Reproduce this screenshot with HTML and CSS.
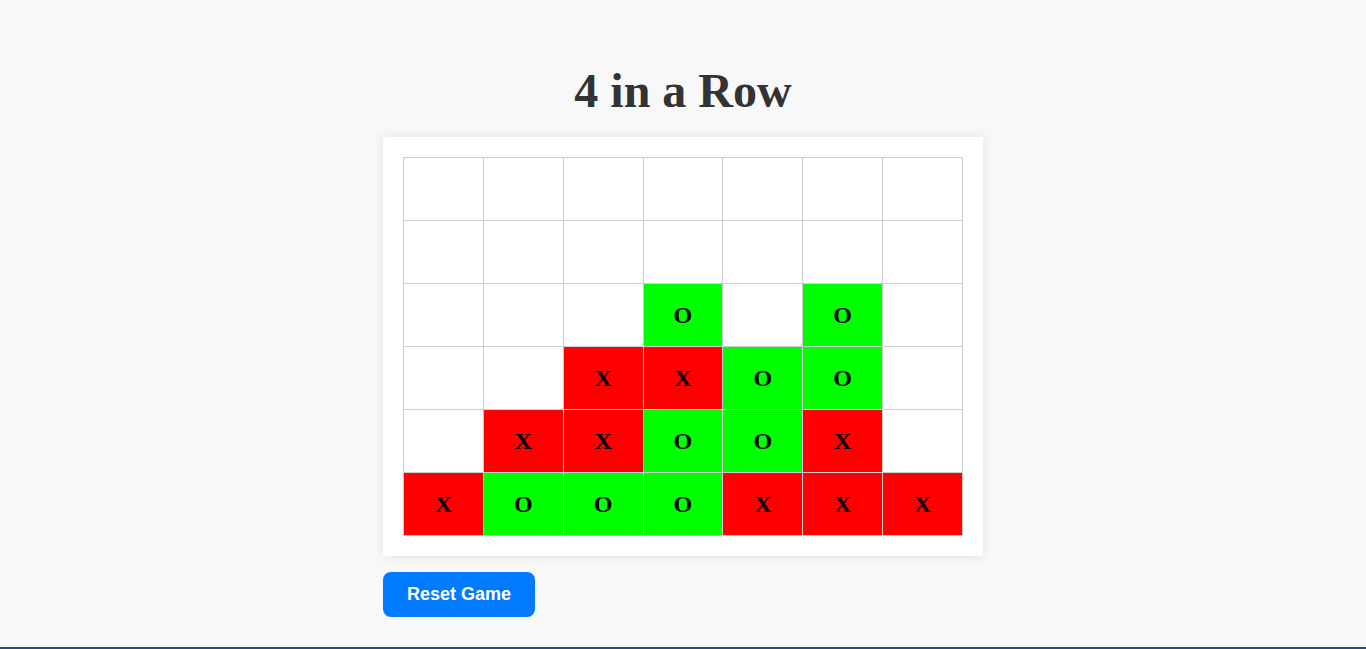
FILE: index.html
```html
<!DOCTYPE html>
<html lang="en">
<head>
<meta charset="utf-8">
<title>4 in a Row</title>
<link rel="stylesheet" href="styles.css">
</head>
<body>
<main class="page">
  <h1 class="title">4 in a Row</h1>
  <div class="game">
    <div class="board-card">
      <table class="board">
        <tr><td></td><td></td><td></td><td></td><td></td><td></td><td></td></tr>
        <tr><td></td><td></td><td></td><td></td><td></td><td></td><td></td></tr>
        <tr><td></td><td></td><td></td><td class="o">O</td><td></td><td class="o">O</td><td></td></tr>
        <tr><td></td><td></td><td class="x">X</td><td class="x">X</td><td class="o">O</td><td class="o">O</td><td></td></tr>
        <tr><td></td><td class="x">X</td><td class="x">X</td><td class="o">O</td><td class="o">O</td><td class="x">X</td><td></td></tr>
        <tr><td class="x">X</td><td class="o">O</td><td class="o">O</td><td class="o">O</td><td class="x">X</td><td class="x">X</td><td class="x">X</td></tr>
      </table>
    </div>
    <button class="reset" type="button">Reset Game</button>
  </div>
</main>
<div class="bottom-line"></div>
</body>
</html>
```
FILE: styles.css
```css
html, body {
  margin: 0;
  padding: 0;
}
body {
  background: #f8f8f8;
  font-family: "Liberation Serif", "Times New Roman", serif;
  color: #333;
}
.page {
  display: flex;
  flex-direction: column;
  align-items: center;
  padding-top: 63px;
}
.title {
  margin: 0 0 19px;
  font-size: 48px;
  font-weight: bold;
  line-height: 55px;
  color: #333;
}
.game {
  width: 600px;
  display: flex;
  flex-direction: column;
  align-items: flex-start;
  gap: 16px;
}
.board-card {
  width: 600px;
  box-sizing: border-box;
  padding: 20px;
  background: #fff;
  box-shadow: 0 0 10px rgba(0, 0, 0, 0.1);
}
.board {
  width: 560px;
  border-collapse: collapse;
  table-layout: fixed;
}
.board td {
  border: 1px solid #ccc;
  height: 62px;
  padding: 0;
  text-align: center;
  vertical-align: middle;
  font-family: "Liberation Serif", "Times New Roman", serif;
  font-weight: bold;
  font-size: 24px;
  color: #000;
  background: #fff;
}
.board td.x {
  background: #ff0000;
}
.board td.o {
  background: #00ff00;
}
.reset {
  border: none;
  border-radius: 8px;
  background: #007bff;
  color: #fff;
  font-family: "Liberation Sans", Arial, sans-serif;
  font-weight: bold;
  font-size: 18px;
  line-height: 21px;
  padding: 12px 24px;
  cursor: pointer;
}
.bottom-line {
  position: fixed;
  left: 0;
  right: 0;
  bottom: 0;
  height: 2px;
  background: #2e4a7a;
}
```
